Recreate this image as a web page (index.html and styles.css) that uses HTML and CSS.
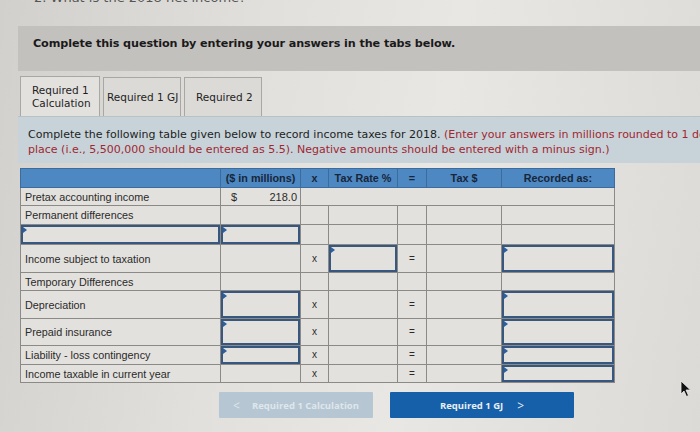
FILE: index.html
```html
<!DOCTYPE html>
<html>
<head>
<meta charset="utf-8">
<link rel="stylesheet" href="styles.css">
</head>
<body>
<div class="top-q">2. What is the 2018 net income?</div>
<div class="page">
  <div class="banner">Complete this question by entering your answers in the tabs below.</div>
  <div class="tabs">
    <div class="tab active">Required 1<br>Calculation</div>
    <div class="tab t2">Required 1 GJ</div>
    <div class="tab t3">Required 2</div>
  </div>
  <div class="panel">
    <p class="instr">Complete the following table given below to record income taxes for 2018. <span class="red">(Enter your answers in millions rounded to 1 decimal<br>place (i.e., 5,500,000 should be entered as 5.5). Negative amounts should be entered with a minus sign.)</span></p>
  </div>
  <table class="grid">
    <colgroup>
      <col class="c-label"><col class="c-mil"><col class="c-x"><col class="c-rate"><col class="c-eq"><col class="c-tax"><col class="c-rec">
    </colgroup>
    <thead>
      <tr class="h">
        <th></th><th>($ in millions)</th><th>x</th><th>Tax Rate %</th><th>=</th><th>Tax $</th><th>Recorded as:</th>
      </tr>
    </thead>
    <tbody>
      <tr class="r18"><td>Pretax accounting income</td><td class="amt"><span>$</span><span>218.0</span></td><td colspan="5"></td></tr>
      <tr class="r19"><td>Permanent differences</td><td></td><td></td><td></td><td></td><td></td><td></td></tr>
      <tr class="r20"><td class="in"><div class="box"></div></td><td class="in"><div class="box"></div></td><td></td><td></td><td></td><td></td><td></td></tr>
      <tr class="r28"><td>Income subject to taxation</td><td></td><td class="op">x</td><td class="in"><div class="box"></div></td><td class="op">=</td><td></td><td class="in"><div class="box"></div></td></tr>
      <tr class="r18"><td>Temporary Differences</td><td></td><td></td><td></td><td></td><td></td><td></td></tr>
      <tr class="r28"><td>Depreciation</td><td class="in"><div class="box"></div></td><td class="op">x</td><td></td><td class="op">=</td><td></td><td class="in"><div class="box"></div></td></tr>
      <tr class="r27"><td>Prepaid insurance</td><td class="in"><div class="box"></div></td><td class="op">x</td><td></td><td class="op">=</td><td></td><td class="in"><div class="box"></div></td></tr>
      <tr class="r19"><td>Liability - loss contingency</td><td class="in"><div class="box"></div></td><td class="op">x</td><td></td><td class="op">=</td><td></td><td class="in"><div class="box"></div></td></tr>
      <tr class="r18"><td>Income taxable in current year</td><td></td><td class="op">x</td><td></td><td class="op">=</td><td></td><td class="in"><div class="box"></div></td></tr>
    </tbody>
  </table>
  <div class="nav">
    <div class="btn prev"><span class="chev">&lt;</span>Required 1 Calculation</div>
    <div class="btn next">Required 1 GJ<span class="chev r">&gt;</span></div>
  </div>
</div>
<svg class="cursor" width="12" height="18" viewBox="0 0 12 18"><path d="M1 1 L1 14 L4 11 L6.5 16.5 L8.5 15.5 L6 10 L10.5 10 Z" fill="#111" stroke="#eee" stroke-width="0.8"/></svg>
</body>
</html>
```
FILE: styles.css
```css
html, body {
  margin: 0;
  padding: 0;
}
body {
  width: 700px;
  height: 432px;
  overflow: hidden;
  position: relative;
  background: linear-gradient(100deg, #d2d0cc 0%, #e2e0dc 35%, #e9e7e3 60%, #dcdad6 100%);
  font-family: "DejaVu Sans", Verdana, sans-serif;
  color: #222;
}
.top-q {
  height: 5px;
  overflow: hidden;
  line-height: 0;
  padding-left: 34px;
  font-size: 13px;
  color: #555;
  margin-top: -2px;
}
.page {
  padding-left: 18px;
}
.banner {
  margin-top: 23px;
  height: 45px;
  background: #c3c1be;
  box-sizing: border-box;
  padding: 11px 0 0 15px;
  font-size: 11.2px;
  font-weight: bold;
  color: #1a1a1a;
  letter-spacing: -0.1px;
}
.tabs {
  display: flex;
  margin-top: 5px;
  margin-left: 2px;
  height: 40px;
  align-items: flex-end;
}
.tab {
  height: 39px;
  box-sizing: border-box;
  border: 1px solid #a9a7a4;
  border-bottom: none;
  background: #dcdad7;
  font-size: 10.5px;
  color: #1e1e1e;
  display: flex;
  align-items: center;
  padding-left: 7px;
  line-height: 13px;
  margin-right: 3px;
}
.tab.active {
  width: 80px;
  height: 40px;
  background: #e3e1de;
  padding-left: 11px;
}
.tab.t2 { width: 78px; padding-left: 3px; }
.tab.t3 { width: 78px; padding-left: 11px; margin-right: 0; }
.panel {
  height: 47px;
  background: #c7d3d9;
  box-sizing: border-box;
  padding: 10px 0 0 10px;
  border-top: 1px solid #b6c2c8;
  overflow: hidden;
}
.instr {
  margin: 0;
  font-size: 11px;
  line-height: 15px;
  color: #1e1e1e;
  white-space: nowrap;
}
.red { color: #a3262f; }
.grid {
  margin-top: 5px;
  margin-left: 2px;
  border-collapse: collapse;
  table-layout: fixed;
  width: 594px;
  font-family: "Liberation Sans", Arial, sans-serif;
  font-size: 10.8px;
  color: #2a2a2a;
}
.c-label { width: 200px; }
.c-mil { width: 80px; }
.c-x { width: 28px; }
.c-rate { width: 69px; }
.c-eq { width: 29px; }
.c-tax { width: 75px; }
.c-rec { width: 113px; }
.grid th {
  background: #4d88c2;
  border: 1px solid #3c6c9c;
  height: 18px;
  padding: 0;
  font-weight: bold;
  color: #17263a;
  font-size: 10.8px;
  text-align: center;
}
.grid td {
  border: 1px solid #8c8a87;
  background: #e3e1dd;
  padding: 0 0 0 3px;
  vertical-align: middle;
  white-space: nowrap;
  line-height: 12px;
}
.grid tbody td:first-child { padding-left: 4px; }
.r18 td { height: 17px; }
.r19 td { height: 18px; }
.r20 td { height: 19px; }
.r28 td { height: 27px; }
.r27 td { height: 26px; }
.grid td.op {
  text-align: center;
  padding: 0;
  font-size: 10px;
}
.grid td.amt {
  padding: 0 3px 0 10px;
}
.amt {
  font-size: 11px;
}
.amt span:first-child { float: left; }
.amt span:last-child { float: right; }
.grid td.in {
  padding: 0;
  position: relative;
}
.box {
  position: absolute;
  inset: 0;
  border: 2px solid #38577f;
  background: #e3e1dd;
}
.box::before {
  content: "";
  position: absolute;
  left: 0;
  top: 0;
  border-top: 3px solid transparent;
  border-bottom: 3px solid transparent;
  border-left: 4px solid #2b5fa0;
}
.nav {
  display: flex;
  margin-top: 9px;
  margin-left: 201px;
  height: 26px;
  gap: 17px;
}
.btn {
  height: 26px;
  display: flex;
  align-items: center;
  justify-content: center;
  font-family: "Open Sans", "DejaVu Sans", sans-serif;
  font-weight: bold;
  font-size: 9.5px;
  border-radius: 1px;
}
.btn.prev {
  width: 154px;
  background: #b6c6d3;
  color: #dfe6ec;
}
.btn.next {
  width: 184px;
  background: #1560a9;
  color: #e8eef5;
}
.chev {
  font-weight: normal;
  font-size: 12px;
  margin-right: 12px;
}
.chev.r {
  margin-right: 0;
  margin-left: 14px;
}
.cursor {
  position: absolute;
  left: 680px;
  top: 380px;
}
```
